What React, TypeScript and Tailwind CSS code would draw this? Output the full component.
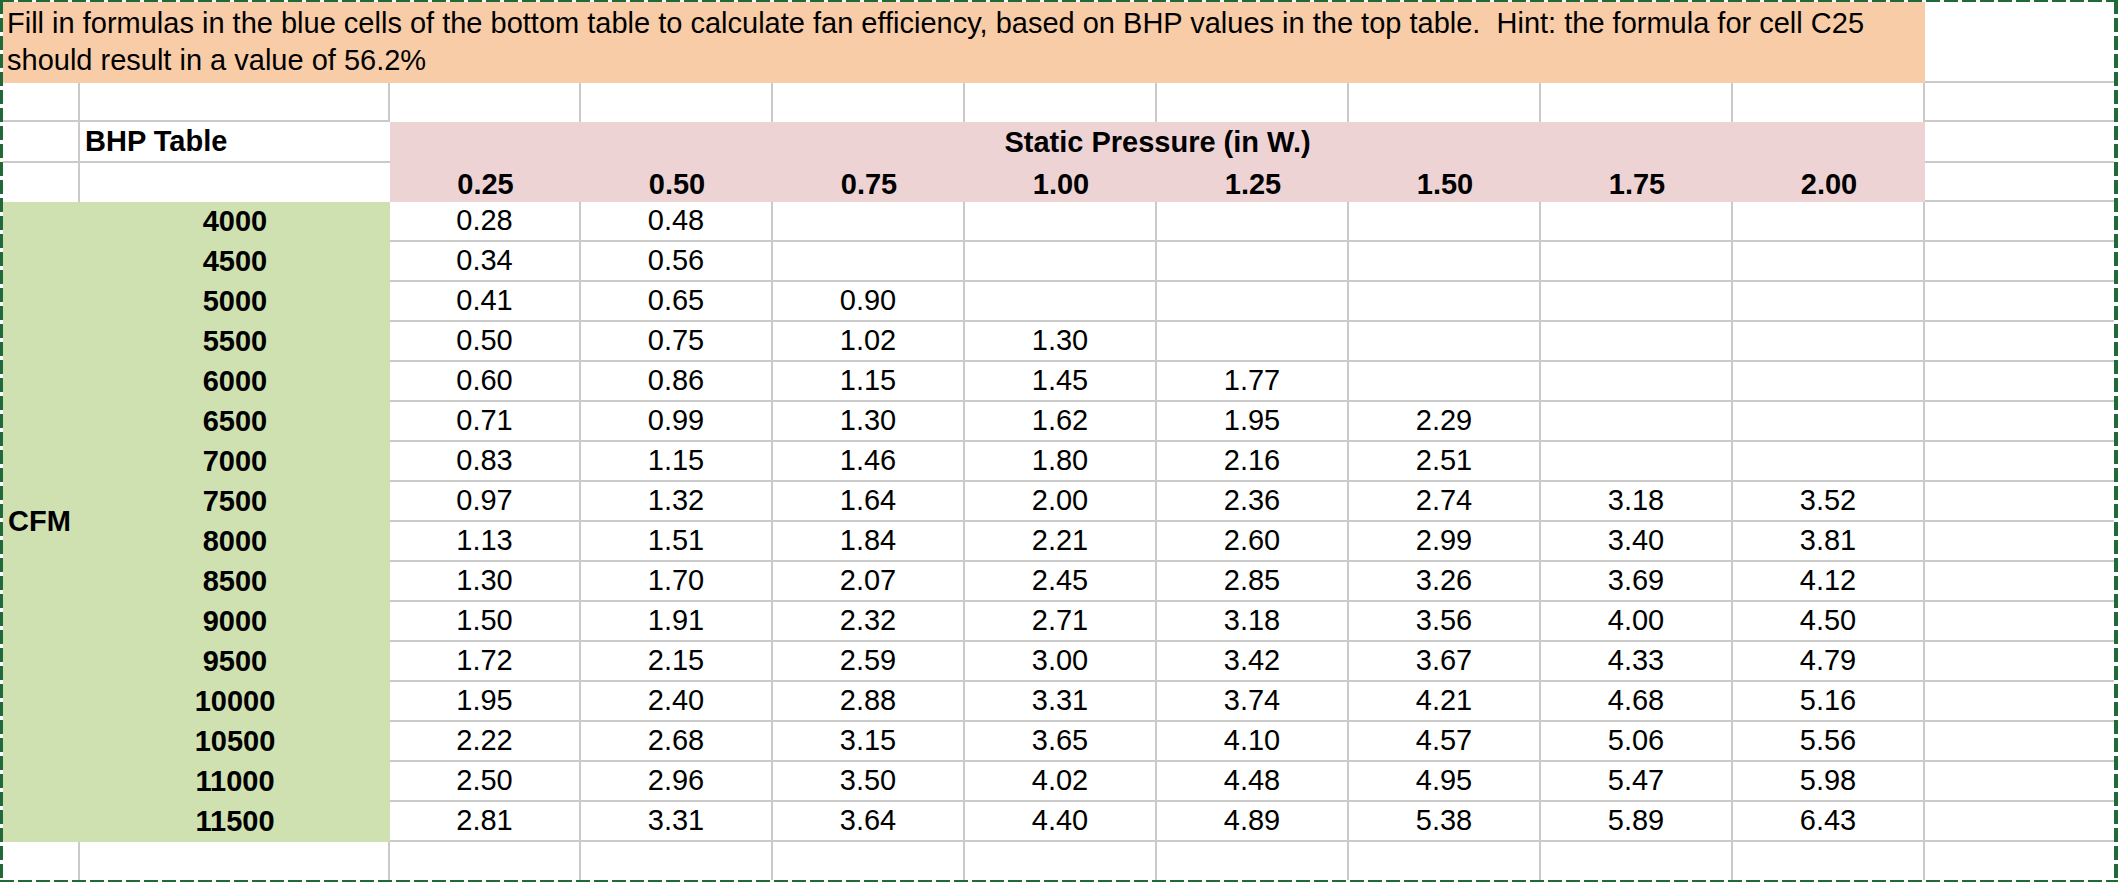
import React from "react"

const pressures = ["0.25", "0.50", "0.75", "1.00", "1.25", "1.50", "1.75", "2.00"]

const bhp: [string, string[]][] = [
  ["4000", ["0.28", "0.48"]],
  ["4500", ["0.34", "0.56"]],
  ["5000", ["0.41", "0.65", "0.90"]],
  ["5500", ["0.50", "0.75", "1.02", "1.30"]],
  ["6000", ["0.60", "0.86", "1.15", "1.45", "1.77"]],
  ["6500", ["0.71", "0.99", "1.30", "1.62", "1.95", "2.29"]],
  ["7000", ["0.83", "1.15", "1.46", "1.80", "2.16", "2.51"]],
  ["7500", ["0.97", "1.32", "1.64", "2.00", "2.36", "2.74", "3.18", "3.52"]],
  ["8000", ["1.13", "1.51", "1.84", "2.21", "2.60", "2.99", "3.40", "3.81"]],
  ["8500", ["1.30", "1.70", "2.07", "2.45", "2.85", "3.26", "3.69", "4.12"]],
  ["9000", ["1.50", "1.91", "2.32", "2.71", "3.18", "3.56", "4.00", "4.50"]],
  ["9500", ["1.72", "2.15", "2.59", "3.00", "3.42", "3.67", "4.33", "4.79"]],
  ["10000", ["1.95", "2.40", "2.88", "3.31", "3.74", "4.21", "4.68", "5.16"]],
  ["10500", ["2.22", "2.68", "3.15", "3.65", "4.10", "4.57", "5.06", "5.56"]],
  ["11000", ["2.50", "2.96", "3.50", "4.02", "4.48", "4.95", "5.47", "5.98"]],
  ["11500", ["2.81", "3.31", "3.64", "4.40", "4.89", "5.38", "5.89", "6.43"]],
]

// plain white cell with excel gridlines on right + bottom
const cell = "border-r-2 border-b-2 border-[#cacaca]"

function Marquee() {
  // copy-selection marching ants round the whole range
  const green = "#1f6a38"
  return (
    <svg className="pointer-events-none absolute inset-0" width={2118} height={882}>
      <g stroke="#ffffff">
        <line x1={0} y1={1} x2={2118} y2={1} strokeWidth={2} />
        <line x1={0} y1={881} x2={2118} y2={881} strokeWidth={2} />
        <line x1={1.5} y1={0} x2={1.5} y2={882} strokeWidth={3} />
        <line x1={2116} y1={0} x2={2116} y2={882} strokeWidth={4} />
      </g>
      <g stroke={green} strokeDasharray="14 4">
        <line x1={0} y1={1} x2={2118} y2={1} strokeWidth={2} />
        <line x1={0} y1={881} x2={2118} y2={881} strokeWidth={2} />
        <line x1={1.5} y1={0} x2={1.5} y2={882} strokeWidth={3} />
        <line x1={2116} y1={0} x2={2116} y2={882} strokeWidth={4} />
      </g>
    </svg>
  )
}

export default function App() {
  return (
    <div className="relative w-[2118px] h-[882px] overflow-hidden bg-white text-black text-[29px] font-['Liberation_Sans',Arial,sans-serif]">
      <div className="grid grid-cols-[80px_310px_191px_repeat(7,192px)_193px] grid-rows-[83px_39px_41px_39px_repeat(16,40px)_40px]">
        {/* instructions banner */}
        <div className="col-span-10 bg-[#f8cca6] pl-[7px] pt-[5px] leading-[37px] whitespace-pre">
          Fill in formulas in the blue cells of the bottom table to calculate fan efficiency, based on BHP values in the top table.  Hint: the formula for cell C25
          <br />
          should result in a value of 56.2%
        </div>
        <div className="border-b-2 border-[#cacaca]"></div>

        {/* empty row */}
        <div className={cell}></div>
        <div className={cell}></div>
        {pressures.map((p, i) => (
          <div key={i} className={i === 7 ? "border-r-2 border-[#cacaca]" : "border-r-2 border-[#cacaca]"}></div>
        ))}
        <div className={cell}></div>

        {/* header rows */}
        <div className={cell}></div>
        <div className="border-b-2 border-[#cacaca] flex items-center pl-[5px] font-bold">BHP Table</div>
        <div className="col-span-8 row-span-2 bg-[#eed3d4] flex flex-col font-bold">
          <div className="h-[41px] flex items-center justify-center">Static Pressure (in W.)</div>
          <div className="h-[39px] grid grid-cols-[191px_repeat(7,192px)]">
            {pressures.map((p) => (
              <div key={p} className="flex items-center justify-center">
                {p}
              </div>
            ))}
          </div>
        </div>
        <div className={cell}></div>
        <div className="border-r-2 border-[#cacaca]"></div>
        <div></div>
        <div className={cell}></div>

        {/* data */}
        {bhp.map(([cfm, vals], r) => (
          <React.Fragment key={cfm}>
            {r === 0 && (
              <div className="row-span-16 bg-[#cfe0b1] flex items-center pl-[8px] font-bold">CFM</div>
            )}
            <div className="bg-[#cfe0b1] flex items-center justify-center font-bold">{cfm}</div>
            {pressures.map((p, i) => (
              <div key={p} className={`${cell} flex items-center justify-center`}>
                {vals[i] ?? ""}
              </div>
            ))}
            <div className={cell}></div>
          </React.Fragment>
        ))}

        {/* trailing empty row */}
        {Array.from({ length: 11 }).map((_, i) => (
          <div key={i} className={i < 2 ? "border-r-2 border-[#cacaca]" : cell}></div>
        ))}
      </div>
      <Marquee />
    </div>
  )
}
